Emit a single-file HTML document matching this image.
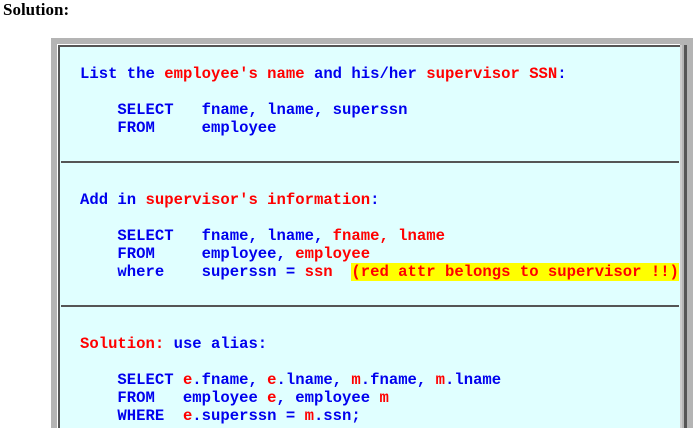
<!DOCTYPE html>
<html style="width:693px;height:428px;overflow:hidden"><head><style>
body{margin:0;width:693px;height:428px;overflow:hidden;background:#fff;position:relative;font-family:"Liberation Serif",serif}
.h{position:absolute;left:3px;top:0;font-weight:bold;font-size:17px;line-height:20px}
.outer{position:absolute;left:51px;top:38px;width:642px;height:390px;background:#b4b4b4}
.inner{position:absolute;left:58px;top:45px;width:621px;height:383px;background:#e0ffff;border-left:2px solid #555;border-top:2px solid #555;box-shadow:-1px -1px 0 #fff}
.rb{position:absolute;left:680px;top:45px;width:2px;height:383px;background:#ccc}
.rb2{position:absolute;left:684px;top:45px;width:3px;height:383px;background:#555}
.sep{position:absolute;left:61px;width:618px;height:2px;background:#555}
.l{position:absolute;left:80px;white-space:pre;font-family:"Liberation Mono",monospace;font-weight:bold;font-size:15.6px;line-height:18px;color:#0000ee}
.r{color:#f00}
.y{background:#ff0;color:#f00}
</style></head><body>
<div class="h">Solution:</div>
<div class="outer"></div>
<div class="inner"></div>
<div class="rb"></div><div class="rb2"></div>
<div class="sep" style="top:161px"></div>
<div class="sep" style="top:305px"></div>
<div class="l" style="top:65px">List the <span class="r">employee's name</span> and his/her <span class="r">supervisor SSN</span>:</div>
<div class="l" style="top:101px">    SELECT   fname, lname, superssn</div>
<div class="l" style="top:119px">    FROM     employee</div>
<div class="l" style="top:191px">Add in <span class="r">supervisor's information</span>:</div>
<div class="l" style="top:227px">    SELECT   fname, lname, <span class="r">fname, lname</span></div>
<div class="l" style="top:245px">    FROM     employee, <span class="r">employee</span></div>
<div class="l" style="top:263px">    where    superssn = <span class="r">ssn</span>  <span class="y">(red attr belongs to supervisor !!)</span></div>
<div class="l" style="top:335px"><span class="r">Solution:</span> use alias:</div>
<div class="l" style="top:371px">    SELECT <span class="r">e</span>.fname, <span class="r">e</span>.lname, <span class="r">m</span>.fname, <span class="r">m</span>.lname</div>
<div class="l" style="top:389px">    FROM   employee <span class="r">e</span>, employee <span class="r">m</span></div>
<div class="l" style="top:407px">    WHERE  <span class="r">e</span>.superssn = <span class="r">m</span>.ssn;</div>
</body></html>
